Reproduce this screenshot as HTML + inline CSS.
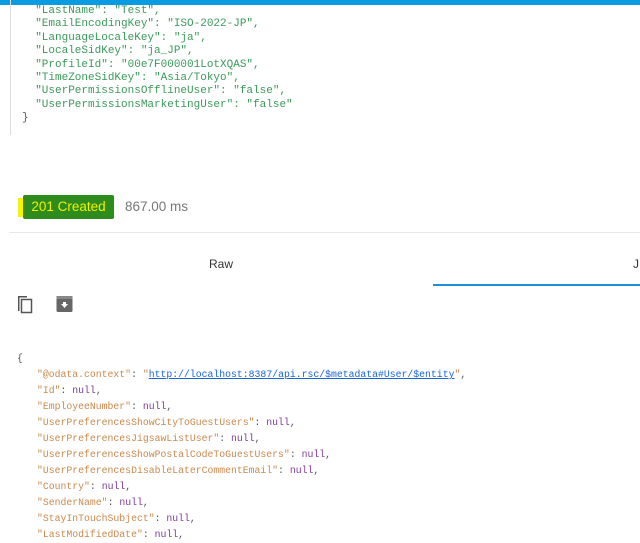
<!DOCTYPE html>
<html><head><meta charset="utf-8"><style>
body{margin:0;width:640px;height:531px;overflow:hidden;background:#fff;position:relative;font-family:"Liberation Sans",sans-serif}
.a{position:absolute}
pre{margin:0;font-family:"Liberation Mono","Noto Sans CJK JP",monospace}
.top{left:0;top:0;width:640px;height:5px;background:#0b9be0}
.vl{left:10px;top:0;width:1px;height:135px;background:#ddd}
.c1{left:22px;top:5px;font-size:11px;line-height:13.4px;color:#3c9a5a}
.c1 .p{color:#555}
.c2{left:37px;top:367px;font-size:9.8px;line-height:16px;color:#555}
.k{color:#c98a4e}.n{color:#7b3b99}.u{color:#1a66d6;text-decoration:underline}
</style></head><body>
<div class="a top"></div>
<div class="a vl"></div>
<pre class="a c1">  "LastName": "Test",
  "EmailEncodingKey": "ISO-2022-JP",
  "LanguageLocaleKey": "ja",
  "LocaleSidKey": "ja_JP",
  "ProfileId": "00e7F000001LotXQAS",
  "TimeZoneSidKey": "Asia/Tokyo",
  "UserPermissionsOfflineUser": "false",
  "UserPermissionsMarketingUser": "false"
<span class="p">}</span></pre>
<div class="a" style="left:18px;top:198px;width:6px;height:19px;background:#f5f500"></div>
<div class="a" style="left:23px;top:195px;width:91px;height:24px;background:#2e8b1e;border-radius:2px;color:#f0f000;font-size:13.5px;line-height:24px;text-align:center">201 Created</div>
<div class="a" style="left:125px;top:195px;line-height:24px;font-size:13.5px;color:#777">867.00 ms</div>
<div class="a" style="left:9px;top:232px;width:631px;height:1px;background:#e8e8e8"></div>
<div class="a" style="left:209px;top:257px;font-size:12px;color:#333">Raw</div>
<div class="a" style="left:633px;top:257px;font-size:12px;color:#333">J</div>
<div class="a" style="left:433px;top:284px;width:207px;height:2px;background:#1e90d8"></div>
<svg class="a" style="left:16px;top:294px" width="22" height="22" viewBox="0 0 22 22"><path d="M2 2h9v1.5H3.5V17H2z" fill="#555"/><rect x="5.5" y="5.5" width="10" height="13" fill="none" stroke="#555" stroke-width="1.5"/></svg>
<svg class="a" style="left:56px;top:295px" width="18" height="18" viewBox="0 0 18 18"><rect x="0.5" y="1" width="16" height="16" rx="1.5" fill="#666"/><rect x="0.5" y="1" width="16" height="3" fill="#888"/><path d="M5 9h7l-3.5 4z M7 7h3v2.5H7z" fill="#fff"/></svg>
<pre class="a" style="left:17px;top:351px;font-size:9.8px;line-height:16px;color:#555">{</pre>
<pre class="a c2"><span class="k">"@odata.context"</span>: <span class="k">"</span><span class="u">http://localhost:8387/api.rsc/$metadata#User/$entity</span><span class="k">"</span>,
<span class="k">"Id"</span>: <span class="n">null</span>,
<span class="k">"EmployeeNumber"</span>: <span class="n">null</span>,
<span class="k">"UserPreferencesShowCityToGuestUsers"</span>: <span class="n">null</span>,
<span class="k">"UserPreferencesJigsawListUser"</span>: <span class="n">null</span>,
<span class="k">"UserPreferencesShowPostalCodeToGuestUsers"</span>: <span class="n">null</span>,
<span class="k">"UserPreferencesDisableLaterCommentEmail"</span>: <span class="n">null</span>,
<span class="k">"Country"</span>: <span class="n">null</span>,
<span class="k">"SenderName"</span>: <span class="n">null</span>,
<span class="k">"StayInTouchSubject"</span>: <span class="n">null</span>,
<span class="k">"LastModifiedDate"</span>: <span class="n">null</span>,</pre>
</body></html>
